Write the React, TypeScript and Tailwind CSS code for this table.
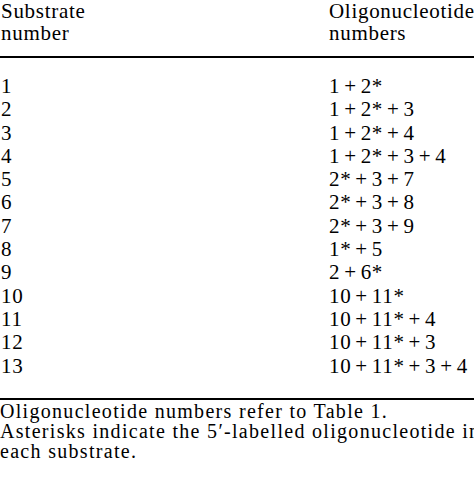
const rows: [string, string][] = [
  ["1", "1 + 2*"],
  ["2", "1 + 2* + 3"],
  ["3", "1 + 2* + 4"],
  ["4", "1 + 2* + 3 + 4"],
  ["5", "2* + 3 + 7"],
  ["6", "2* + 3 + 8"],
  ["7", "2* + 3 + 9"],
  ["8", "1* + 5"],
  ["9", "2 + 6*"],
  ["10", "10 + 11*"],
  ["11", "10 + 11* + 4"],
  ["12", "10 + 11* + 3"],
  ["13", "10 + 11* + 3 + 4"],
];

export default function App() {
  return (
    <div className="w-[474px] h-[482px] overflow-hidden bg-white text-black font-['Liberation_Serif',serif]">
      <div className="flex text-[21px] leading-[22px] tracking-[0.7px] pl-px">
        <div className="w-[328px] shrink-0">
          <div>Substrate</div>
          <div>number</div>
        </div>
        <div className="whitespace-nowrap">
          <div>Oligonucleotide</div>
          <div>numbers</div>
        </div>
      </div>
      <div className="mt-[12px] h-[2px] bg-black" />
      <div className="pt-[17px] pb-[20px] text-[21px] leading-[23.3px] tracking-[0.7px] [word-spacing:-2px] pl-px">
        {rows.map(([n, o]) => (
          <div key={n} className="flex">
            <div className="w-[328px] shrink-0">{n}</div>
            <div className="whitespace-pre">{o}</div>
          </div>
        ))}
      </div>
      <div className="h-[2px] bg-black" />
      <div className="pt-px text-[20px] leading-[20px] tracking-[1.3px] whitespace-nowrap">
        <div>Oligonucleotide numbers refer to Table 1.</div>
        <div>Asterisks indicate the 5′-labelled oligonucleotide in</div>
        <div>each substrate.</div>
      </div>
    </div>
  );
}
